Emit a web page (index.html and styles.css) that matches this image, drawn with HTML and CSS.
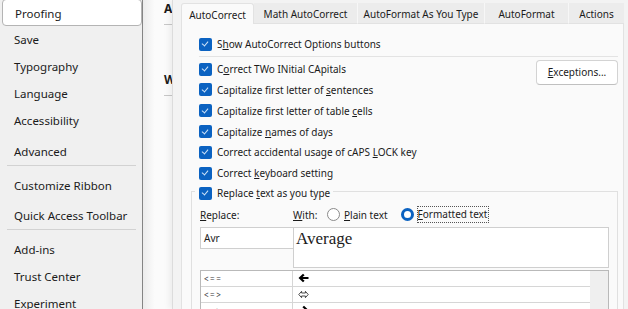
FILE: index.html
```html
<!DOCTYPE html>
<html lang="en">
<head>
<title>AutoCorrect</title>
<meta name="viewport" content="width=device-width, initial-scale=1.0">
<link rel="stylesheet" href="styles.css">
</head>
<body>
<div class="nav">
  <div class="nav-item selected">Proofing</div>
  <div class="nav-item">Save</div>
  <div class="nav-item">Typography</div>
  <div class="nav-item">Language</div>
  <div class="nav-item">Accessibility</div>
  <div class="nav-item advanced">Advanced</div>
  <div class="nav-sep"></div>
  <div class="nav-item ribbon">Customize Ribbon</div>
  <div class="nav-item toolbar">Quick Access Toolbar</div>
  <div class="nav-sep"></div>
  <div class="nav-item addins">Add-ins</div>
  <div class="nav-item">Trust Center</div>
  <div class="nav-item">Experiment</div>
</div>

<div class="gutter">
  <div class="gutter-head">AutoCorrect options</div>
  <div class="gutter-head second">When correcting spelling</div>
</div>

<div class="dialog">
  <div class="tabs">
    <div class="tab active">AutoCorrect</div>
    <div class="tab">Math AutoCorrect</div>
    <div class="tab">AutoFormat As You Type</div>
    <div class="tab">AutoFormat</div>
    <div class="tab">Actions</div>
  </div>

  <div class="panel">
    <div class="row first"><span class="check"></span><span>S<u>h</u>ow AutoCorrect Options buttons</span></div>
    <div class="divider"></div>

    <div class="options">
      <div class="rows">
        <div class="row"><span class="check"></span><span>C<u>o</u>rrect TWo INitial CApitals</span></div>
        <div class="row"><span class="check"></span><span>Capitalize first letter of <u>s</u>entences</span></div>
        <div class="row"><span class="check"></span><span>Capitalize first letter of table <u>c</u>ells</span></div>
        <div class="row"><span class="check"></span><span>Capitalize <u>n</u>ames of days</span></div>
        <div class="row"><span class="check"></span><span>Correct accidental usage of cAPS <u>L</u>OCK key</span></div>
        <div class="row"><span class="check"></span><span>Correct <u>k</u>eyboard setting</span></div>
      </div>
      <button class="btn"><u>E</u>xceptions...</button>
    </div>

    <div class="group">
      <div class="row legend"><span class="check"></span><span>Replace <u>t</u>ext as you type</span></div>

      <div class="labels">
        <span class="lbl-replace"><u>R</u>eplace:</span>
        <span class="lbl-with"><u>W</u>ith:</span>
        <span class="radio"></span><span class="radio-text"><u>P</u>lain text</span>
        <span class="radio on"></span><span class="radio-text focus"><u>F</u>ormatted text</span>
      </div>

      <div class="inputs">
        <div class="input-replace">Avr</div>
        <div class="input-with">Average</div>
      </div>

      <div class="table">
        <div class="table-body">
          <div class="trow">
            <div class="tcell key">&lt;==</div>
            <div class="tcell val">
              <svg width="11" height="10" viewBox="0 0 11 10"><path d="M0.5 5 L5 0.8 L6.6 2.2 L4.6 4 H10.5 V6 H4.6 L6.6 7.8 L5 9.2 Z" fill="#000"/></svg>
            </div>
          </div>
          <div class="trow">
            <div class="tcell key">&lt;=&gt;</div>
            <div class="tcell val">
              <svg width="11" height="9" viewBox="0 0 11 9"><path d="M0.8 4.5 L3.6 1.3 V3 H7.4 V1.3 L10.2 4.5 L7.4 7.7 V6 H3.6 V7.7 Z" fill="none" stroke="#333" stroke-width="0.9"/></svg>
            </div>
          </div>
          <div class="trow">
            <div class="tcell key">==&gt;</div>
            <div class="tcell val">
              <svg width="11" height="10" viewBox="0 0 11 10"><path d="M10.5 5 L6 0.8 L4.4 2.2 L6.4 4 H0.5 V6 H6.4 L4.4 7.8 L6 9.2 Z" fill="#000"/></svg>
            </div>
          </div>
        </div>
        <div class="scrollbar"></div>
      </div>
    </div>
  </div>
</div>
</body>
</html>
```

FILE: styles.css
```css
* {
  margin: 0;
  padding: 0;
  box-sizing: border-box;
}

html, body {
  height: 100%;
}

body {
  display: flex;
  overflow: hidden;
  background-color: #fafafa;
  color: #1b1b1b;
  font-family: "Noto Sans", "Open Sans", sans-serif;
  font-size: 10px;
}

/* left options list */
.nav {
  width: 143px;
  flex-shrink: 0;
  background-color: #f0f0f0;
  border-right: 1px solid #858585;
  font-size: 11.5px;
}

.nav-item {
  height: 27px;
  line-height: 27px;
  padding-left: 14px;
  white-space: nowrap;
}

.nav-item.selected {
  margin: -1px 0 0 2px;
  width: 140px;
  padding-left: 12px;
  background-color: #fff;
  border: 1px solid #b4b4b4;
  border-radius: 4px;
}

.nav-item.advanced {
  margin-top: 4px;
}

.nav-item.ribbon {
  height: 31px;
  line-height: 31px;
  margin-top: 4px;
}

.nav-item.toolbar {
  height: 28px;
  line-height: 30px;
}

.nav-item.addins {
  margin-top: 6px;
}

.nav-sep {
  height: 1px;
  margin: 0 6px 0 7px;
  background-color: #d2d2d2;
}

/* strip of the main options page behind the dialog */
.gutter {
  width: 29px;
  flex-shrink: 0;
  padding-left: 21px;
  overflow: hidden;
  background: linear-gradient(to right, #ececec, #fbfbfb 40%);
}

.gutter-head {
  width: 200px;
  height: 16px;
  margin-top: 1px;
  padding-bottom: 7px;
  box-sizing: content-box;
  font-weight: bold;
  font-size: 12px;
  line-height: 16px;
  white-space: nowrap;
  border-bottom: 1px solid #c8c8c8;
}

.gutter-head.second {
  margin-top: 47px;
}

/* the AutoCorrect dialog */
.dialog {
  flex-grow: 1;
  padding: 3px 4px 0 8px;
  background-color: #f3f3f3;
  border-left: 1px solid #dcdcdc;
  box-shadow: -3px 0 6px rgba(0, 0, 0, 0.06);
}

.tabs {
  display: flex;
  height: 21px;
}

.tab {
  height: 21px;
  line-height: 22px;
  text-align: center;
  background-color: #ececec;
  border-right: 1px solid #f7f7f7;
  border-bottom: 1px solid #e2e2e2;
  white-space: nowrap;
}

.tab.active {
  width: 73px;
  background-color: #fafafa;
  border: 1px solid #e2e2e2;
  border-bottom: none;
  border-radius: 3px 3px 0 0;
}

.tab:nth-child(2) { width: 104px; }
.tab:nth-child(3) { width: 127px; }
.tab:nth-child(4) { width: 84px; }
.tab:nth-child(5) { flex-grow: 1; border-right: none; }

.panel {
  height: 300px;
  padding: 10px 5px 0 9px;
  background-color: #fafafa;
  border-left: 1px solid #e2e2e2;
  border-right: 1px solid #e2e2e2;
}

.row {
  display: flex;
  align-items: center;
  gap: 5px;
  height: 20.8px;
  padding-left: 8px;
  white-space: nowrap;
}

.check {
  width: 13px;
  height: 13px;
  flex-shrink: 0;
  border-radius: 2px;
  background-color: #0b62c1;
  position: relative;
}

.check::after {
  content: "";
  position: absolute;
  left: 4px;
  top: 2.5px;
  width: 3px;
  height: 5px;
  border-right: 1px solid #cfe3f8;
  border-bottom: 1px solid #cfe3f8;
  transform: rotate(40deg);
}

.divider {
  height: 1px;
  margin: 1px 0 2px 8px;
  background-color: #e3e3e3;
}

.options {
  display: flex;
  justify-content: space-between;
  align-items: flex-start;
}

.btn {
  width: 82px;
  height: 25px;
  margin-top: 1px;
  font-family: inherit;
  font-size: 10px;
  color: #1b1b1b;
  background-color: #fff;
  border: 1px solid #d3d3d3;
  border-bottom-color: #c0c0c0;
  border-radius: 4px;
}

.group {
  height: 200px;
  margin-top: 7.5px;
  padding: 0 8px;
  border: 1px solid #e0e0e0;
}

.row.legend {
  width: max-content;
  margin: -9.3px 0 0 -5px;
  padding: 0 3px 0 4px;
  background-color: #fafafa;
}

.labels {
  display: flex;
  align-items: center;
  height: 22px;
  white-space: nowrap;
}

.lbl-replace {
  width: 93px;
}

.lbl-with {
  width: 34px;
}

.radio {
  width: 13px;
  height: 13px;
  flex-shrink: 0;
  border-radius: 50%;
  border: 1px solid #8a8a8a;
  background-color: #fff;
  margin-right: 4px;
}

.radio.on {
  border: 3.5px solid #0b62c1;
}

.radio-text {
  margin-right: 13px;
}

.radio-text.focus {
  margin-left: -1px;
  padding: 0 1px 1px 0;
  border: 1px dotted #555;
}

.inputs {
  display: flex;
  align-items: flex-start;
  margin-top: 1px;
}

.input-replace {
  width: 93px;
  height: 22px;
  padding: 3px 3px;
  background-color: #fff;
  border: 1px solid #cfcfcf;
  border-right: none;
}

.input-with {
  flex-grow: 1;
  height: 41px;
  padding: 0 2px;
  background-color: #fff;
  border: 1px solid #cfcfcf;
  font-family: "Liberation Serif", "Times New Roman", serif;
  font-size: 17px;
  line-height: 22px;
}

.table {
  display: flex;
  height: 60px;
  margin-top: 2px;
  background-color: #fff;
  border: 1px solid #b9b9b9;
}

.table-body {
  flex-grow: 1;
}

.trow {
  display: flex;
  height: 16px;
  border-bottom: 1px solid #d6d6d6;
}

.tcell {
  height: 15px;
  line-height: 15px;
  padding-left: 3px;
}

.tcell.key {
  width: 92px;
  border-right: 1px solid #d6d6d6;
  font-size: 8px;
  letter-spacing: 1.5px;
  color: #333;
}

.tcell.val {
  flex-grow: 1;
  padding-left: 5px;
  display: flex;
  align-items: center;
}

.scrollbar {
  width: 18px;
  background-color: #efefef;
}
```
